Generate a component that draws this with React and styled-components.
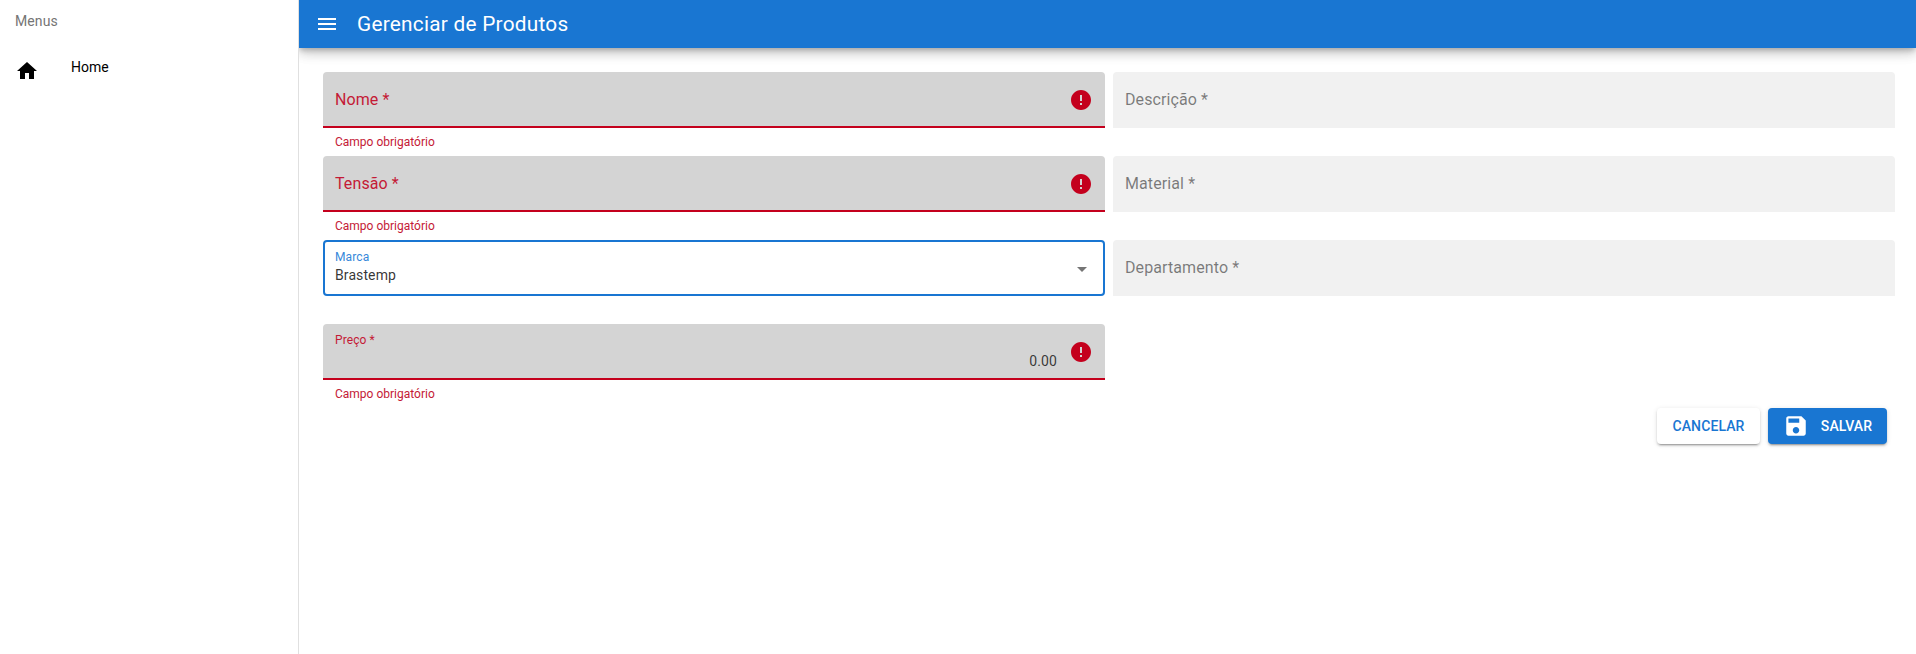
import React from "react";
import styled, { createGlobalStyle } from "styled-components";

const GlobalStyle = createGlobalStyle`
  html, body {
    margin: 0;
    padding: 0;
    height: 100%;
    background: #fff;
    font-family: Roboto, "Liberation Sans", sans-serif;
  }
  #root {
    height: 100%;
  }
`;

const Layout = styled.div`
  display: flex;
  height: 654px;
  overflow: hidden;
`;

const Sidebar = styled.aside`
  position: relative;
  z-index: 1;
  width: 298px;
  flex-shrink: 0;
  background: #fff;
  border-right: 1px solid #e0e0e0;
`;

const MenuTitle = styled.div`
  padding: 13px 15px 0;
  height: 29px;
  line-height: 16px;
  font-size: 14px;
  letter-spacing: 0.1px;
  color: #757575;
`;

const MenuItem = styled.div`
  display: flex;
  padding: 16px 0 0 15px;
  color: #000;
  font-size: 14px;
`;

const HomeGlyph = styled.svg`
  width: 24px;
  height: 24px;
  margin: 1px 32px 0 0;
  fill: #000;
`;

const HomeLabel = styled.span`
  margin-top: -1px;
  line-height: 20px;
`;

const Main = styled.main`
  flex: 1;
  display: flex;
  flex-direction: column;
  min-width: 0;
`;

const TopBar = styled.header`
  display: flex;
  align-items: center;
  height: 48px;
  flex-shrink: 0;
  padding-left: 16px;
  background: #1976d2;
  color: #fff;
  box-shadow: 0 3px 5px -1px rgba(0, 0, 0, 0.2), 0 6px 10px 0 rgba(0, 0, 0, 0.14), 0 1px 18px 0 rgba(0, 0, 0, 0.12);
`;

const MenuGlyph = styled.svg`
  width: 24px;
  height: 24px;
  margin-right: 18px;
  fill: #fff;
`;

const PageTitle = styled.h1`
  margin: 0;
  font-size: 20.8px;
  font-weight: 400;
  letter-spacing: 0.25px;
`;

const Form = styled.form`
  display: grid;
  grid-template-columns: 782px 782px;
  grid-auto-rows: 84px;
  column-gap: 8px;
  padding: 24px 0 0 24px;
`;

const Cell = styled.div`
  display: flex;
  flex-direction: column;
`;

const Field = styled.div`
  position: relative;
  display: flex;
  align-items: center;
  height: 56px;
  box-sizing: border-box;
  padding: 0 12px 2px;
  border-radius: 4px 4px 0 0;
  background: #f1f1f1;
  color: rgba(0, 0, 0, 0.5);
  font-size: 16px;
  letter-spacing: 0.1px;

  ${(p) =>
    p.$error &&
    `
    padding-bottom: 0;
    background: #d4d4d4;
    color: #c41a36;
    border-bottom: 2px solid #c4001d;
  `}

  ${(p) =>
    p.$focused &&
    `
    background: #fff;
    border: 2px solid #1976d2;
    border-radius: 4px;
    padding: 0 10px;
    color: rgba(0, 0, 0, 0.87);
  `}
`;

const FloatLabel = styled.span`
  position: absolute;
  left: ${(p) => (p.$focused ? "10px" : "12px")};
  top: ${(p) => (p.$focused ? "8px" : "9px")};
  font-size: 12px;
  line-height: 14px;
  color: ${(p) => (p.$focused ? "#3688da" : "#c41a36")};
`;

const SelectValue = styled.span`
  margin-top: 14px;
  font-size: 14px;
  color: rgba(0, 0, 0, 0.8);
`;

const Arrow = styled.span`
  position: absolute;
  right: 16px;
  top: 25px;
  width: 0;
  height: 0;
  border-left: 5px solid transparent;
  border-right: 5px solid transparent;
  border-top: 5px solid rgba(0, 0, 0, 0.54);
`;

const PriceValue = styled.span`
  position: absolute;
  right: 48px;
  top: 27px;
  font-size: 14px;
  line-height: 20px;
  color: rgba(0, 0, 0, 0.75);
`;

const ErrorGlyph = styled.svg`
  position: absolute;
  right: 12px;
  top: 16px;
  width: 24px;
  height: 24px;
  fill: #c4001d;
`;

const Hint = styled.div`
  padding: 7px 12px 0;
  font-size: 12px;
  line-height: 14px;
  color: #c41a36;
`;

const Actions = styled.div`
  display: flex;
  justify-content: flex-end;
  gap: 8px;
  width: 1564px;
  margin-left: 24px;
`;

const Button = styled.button`
  display: flex;
  align-items: center;
  justify-content: center;
  height: 36px;
  box-sizing: border-box;
  padding: 0;
  width: ${(p) => (p.$primary ? "119px" : "103px")};
  border: 0;
  border-radius: 4px;
  background: ${(p) => (p.$primary ? "#1976d2" : "#fff")};
  color: ${(p) => (p.$primary ? "#fff" : "#1976d2")};
  font-family: inherit;
  font-size: 14px;
  font-weight: 500;
  letter-spacing: 0.1px;
  box-shadow: 0 3px 1px -2px rgba(0, 0, 0, 0.2), 0 2px 2px 0 rgba(0, 0, 0, 0.14), 0 1px 5px 0 rgba(0, 0, 0, 0.12);
`;

const SaveGlyph = styled.svg`
  width: 26px;
  height: 26px;
  margin-right: 12px;
  fill: #fff;
`;

const ErrorIcon = () => (
  <ErrorGlyph viewBox="0 0 24 24">
    <path d="M12 2C6.48 2 2 6.48 2 12s4.48 10 10 10 10-4.48 10-10S17.52 2 12 2zm1 15h-2v-2h2v2zm0-4h-2V7h2v6z" />
  </ErrorGlyph>
);

const requiredFields = [
  { left: "Nome *", right: "Descrição *" },
  { left: "Tensão *", right: "Material *" },
];

export default function App() {
  return (
    <Layout>
      <GlobalStyle />
      <Sidebar>
        <MenuTitle>Menus</MenuTitle>
        <MenuItem>
          <HomeGlyph viewBox="0 0 24 24">
            <path d="M10 20v-6h4v6h5v-8h3L12 3 2 12h3v8z" />
          </HomeGlyph>
          <HomeLabel>Home</HomeLabel>
        </MenuItem>
      </Sidebar>
      <Main>
        <TopBar>
          <MenuGlyph viewBox="0 0 24 24">
            <path d="M3 18h18v-2H3v2zm0-5h18v-2H3v2zm0-7v2h18V6H3z" />
          </MenuGlyph>
          <PageTitle>Gerenciar de Produtos</PageTitle>
        </TopBar>
        <Form>
          {requiredFields.map((row) => (
            <React.Fragment key={row.left}>
              <Cell>
                <Field $error>
                  {row.left}
                  <ErrorIcon />
                </Field>
                <Hint>Campo obrigatório</Hint>
              </Cell>
              <Cell>
                <Field>{row.right}</Field>
              </Cell>
            </React.Fragment>
          ))}
          <Cell>
            <Field $focused>
              <FloatLabel $focused>Marca</FloatLabel>
              <SelectValue>Brastemp</SelectValue>
              <Arrow />
            </Field>
          </Cell>
          <Cell>
            <Field>Departamento *</Field>
          </Cell>
          <Cell>
            <Field $error>
              <FloatLabel>Preço *</FloatLabel>
              <PriceValue>0.00</PriceValue>
              <ErrorIcon />
            </Field>
            <Hint>Campo obrigatório</Hint>
          </Cell>
        </Form>
        <Actions>
          <Button type="button">CANCELAR</Button>
          <Button type="button" $primary>
            <SaveGlyph viewBox="0 0 24 24">
              <path d="M17 3H5c-1.11 0-2 .9-2 2v14c0 1.1.89 2 2 2h14c1.1 0 2-.9 2-2V7l-4-4zm-5 16c-1.66 0-3-1.34-3-3s1.34-3 3-3 3 1.34 3 3-1.34 3-3 3zm3-10H5V5h10v4z" />
            </SaveGlyph>
            SALVAR
          </Button>
        </Actions>
      </Main>
    </Layout>
  );
}
